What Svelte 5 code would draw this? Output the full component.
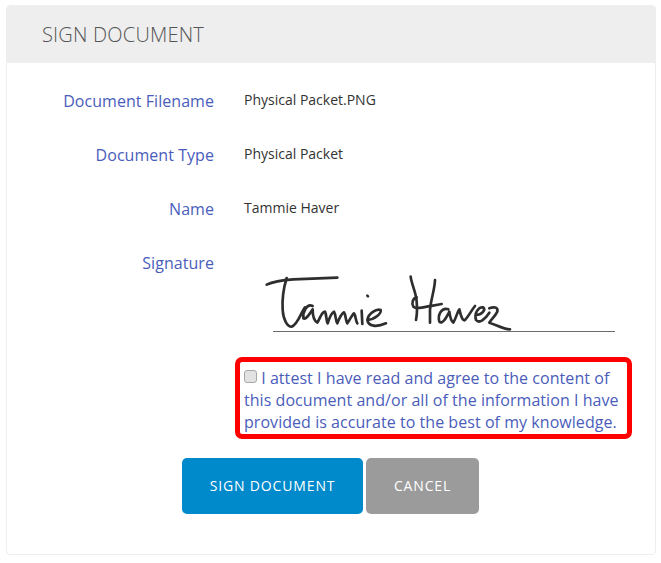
<script>
  const rows = [
    { label: 'Document Filename', value: 'Physical Packet.PNG' },
    { label: 'Document Type', value: 'Physical Packet' },
    { label: 'Name', value: 'Tammie Haver' }
  ];
</script>

<div class="page">
  <section class="card">
    <header class="head"><h1>SIGN DOCUMENT</h1></header>
    <div class="body">
      {#each rows as row}
        <div class="row">
          <div class="label">{row.label}</div>
          <div class="value">{row.value}</div>
        </div>
      {/each}
      <div class="row sigrow">
        <div class="label">Signature</div>
        <svg class="sig" viewBox="0 0 1110 210" width="370" height="70" aria-label="Signature">
          <g fill="none" stroke="#2e2e2e" stroke-width="8" stroke-linecap="round" stroke-linejoin="round">
            <path d="M20 44C40 34 70 30 100 28L232 23" />
            <path d="M80 24C72 50 66 90 68 120C70 150 82 170 95 170C112 165 122 130 135 112" />
            <path d="M158 108C140 100 128 125 130 145C138 150 150 130 158 118C158 135 160 152 172 158C180 145 185 125 195 125C200 135 198 150 203 160C208 145 213 128 222 125C228 135 226 150 232 160C238 145 244 130 252 127C258 135 256 150 262 160C270 148 276 135 282 130C288 138 286 150 292 160" />
            <path d="M305 122L307 162" />
            <path d="M322 77L324 79" />
            <path d="M322 150C345 148 365 130 362 120C350 115 325 130 322 150C325 170 350 172 378 160" />
            <g transform="translate(420 0)">
              <path d="M32 20C35 45 48 65 50 95C52 120 50 140 48 150" />
              <path d="M105 30C104 60 92 90 90 120L90 158" />
              <path d="M50 82C38 85 34 100 40 110C50 118 70 112 125 102" />
              <path d="M145 118C125 110 112 135 118 155C128 165 140 140 148 125C150 140 155 155 160 158C168 145 172 125 178 118C182 135 188 155 195 150C205 140 215 120 225 108" />
              <path d="M228 135C245 135 258 120 250 112C235 110 222 130 228 150C238 162 255 148 268 128" />
              <path d="M268 115C280 110 295 110 292 125C285 140 272 150 268 158C290 165 310 178 330 178" />
            </g>
          </g>
          <rect x="39" y="183" width="1026" height="3" fill="#6d6d6d" />
        </svg>
      </div>
      <div class="attest">
        <label class="box">
          <input type="checkbox" />
          I attest I have read and agree to the content of this document and/or all of the information I have provided is accurate to the best of my knowledge.
        </label>
      </div>
      <div class="actions">
        <button class="btn primary">SIGN DOCUMENT</button>
        <button class="btn muted">CANCEL</button>
      </div>
    </div>
  </section>
</div>

<style>
  :global(body) {
    margin: 0;
    background: #fff;
    font-family: "Open Sans", "Liberation Sans", sans-serif;
  }
  .page {
    padding: 5px 5px 8px 6px;
  }
  .card {
    border: 1px solid #eeeeee;
    border-radius: 4px;
    height: 548px;
    overflow: hidden;
  }
  .head {
    background: #eeeeee;
    height: 57px;
    display: flex;
    align-items: center;
    padding-left: 35px;
  }
  h1 {
    margin: 0;
    font-size: 20px;
    font-weight: 300;
    letter-spacing: 0.2px;
    color: #555;
    line-height: 1;
  }
  .body {
    padding-top: 25px;
  }
  .row {
    display: flex;
    height: 54px;
  }
  .label {
    width: 207px;
    text-align: right;
    font-size: 16px;
    letter-spacing: 0.05px;
    line-height: 26px;
    color: #4a5dbb;
    flex: none;
  }
  .value {
    margin-left: 30px;
    font-size: 14px;
    line-height: 22px;
    color: #333;
    padding-top: 1px;
  }
  .sigrow {
    height: 107px;
  }
  .sig {
    display: block;
    margin-left: 46px;
    margin-top: 20px;
    flex: none;
  }
  .attest {
    padding-left: 228px;
  }
  .box {
    display: block;
    box-sizing: border-box;
    width: 397px;
    height: 82px;
    border: 5px solid #f00;
    border-radius: 7px;
    padding: 5px 0 0 4px;
    font-size: 16px;
    letter-spacing: 0.05px;
    line-height: 22px;
    color: #4a5dbb;
  }
  input {
    appearance: none;
    margin: 0;
    width: 13px;
    height: 13px;
    vertical-align: 1px;
    background: #e2e2e2;
    border: 1px solid #a8a8a8;
    border-radius: 3px;
    box-sizing: border-box;
  }
  .actions {
    display: flex;
    gap: 3px;
    padding: 19px 0 0 175px;
  }
  .btn {
    border: 0;
    border-radius: 5px;
    height: 56px;
    color: #fff;
    font: 400 14px "Open Sans", sans-serif;
    letter-spacing: 0.85px;
    padding: 0 0 1px;
  }
  .primary {
    width: 181px;
    background: #0089cb;
  }
  .muted {
    width: 113px;
    background: #9b9b9b;
  }
</style>
